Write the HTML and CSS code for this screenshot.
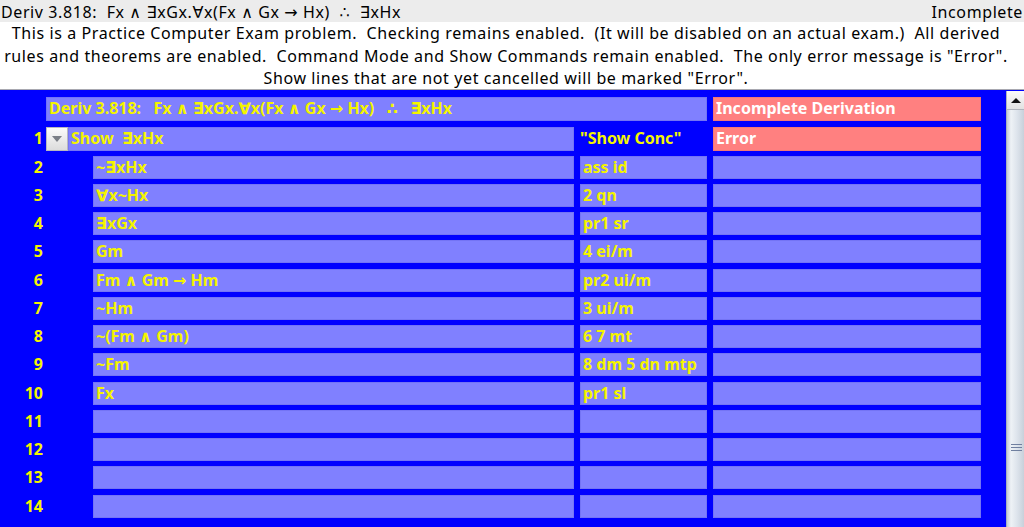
FILE: index.html
```html
<!DOCTYPE html>
<html>
<head>
<meta charset="utf-8">
<link rel="stylesheet" href="styles.css">
</head>
<body>
<div class="titlebar">
  <span>Deriv 3.818:&nbsp; Fx ∧ ∃xGx.∀x(Fx ∧ Gx → Hx)&nbsp; ∴&nbsp; ∃xHx</span>
  <span>Incomplete</span>
</div>
<div class="notice">
  This is a Practice Computer Exam problem.&nbsp; Checking remains enabled.&nbsp; (It will be disabled on an actual exam.)&nbsp; All derived<br>
  rules and theorems are enabled.&nbsp; Command Mode and Show Commands remain enabled.&nbsp; The only error message is "Error".<br>
  Show lines that are not yet cancelled will be marked "Error".
</div>
<div class="main">
  <div class="canvas">
    <div class="row header">
      <div class="num"></div>
      <div class="box headbox">Deriv 3.818:&nbsp;&nbsp; Fx ∧ ∃xGx.∀x(Fx ∧ Gx → Hx)&nbsp;&nbsp; ∴&nbsp;&nbsp; ∃xHx</div>
      <div class="box red status">Incomplete Derivation</div>
    </div>
    <div class="row first">
      <div class="num">1</div>
      <div class="drop"><svg width="12" height="8" viewBox="0 0 12 8"><path d="M1 1 L11 1 L6 7 Z" fill="#7a7e86"/></svg></div>
      <div class="box show">Show&nbsp; ∃xHx</div>
      <div class="just plain">"Show Conc"</div>
      <div class="box red status">Error</div>
    </div>
    <div class="row"><div class="num">2</div><div class="box f">~∃xHx</div><div class="box just">ass id</div><div class="box status"></div></div>
    <div class="row"><div class="num">3</div><div class="box f">∀x~Hx</div><div class="box just">2 qn</div><div class="box status"></div></div>
    <div class="row"><div class="num">4</div><div class="box f">∃xGx</div><div class="box just">pr1 sr</div><div class="box status"></div></div>
    <div class="row"><div class="num">5</div><div class="box f">Gm</div><div class="box just">4 ei/m</div><div class="box status"></div></div>
    <div class="row"><div class="num">6</div><div class="box f">Fm ∧ Gm → Hm</div><div class="box just">pr2 ui/m</div><div class="box status"></div></div>
    <div class="row"><div class="num">7</div><div class="box f">~Hm</div><div class="box just">3 ui/m</div><div class="box status"></div></div>
    <div class="row"><div class="num">8</div><div class="box f">~(Fm ∧ Gm)</div><div class="box just">6 7 mt</div><div class="box status"></div></div>
    <div class="row"><div class="num">9</div><div class="box f">~Fm</div><div class="box just">8 dm 5 dn mtp</div><div class="box status"></div></div>
    <div class="row"><div class="num">10</div><div class="box f">Fx</div><div class="box just">pr1 sl</div><div class="box status"></div></div>
    <div class="row"><div class="num">11</div><div class="box f"></div><div class="box just"></div><div class="box status"></div></div>
    <div class="row"><div class="num">12</div><div class="box f"></div><div class="box just"></div><div class="box status"></div></div>
    <div class="row"><div class="num">13</div><div class="box f"></div><div class="box just"></div><div class="box status"></div></div>
    <div class="row"><div class="num">14</div><div class="box f"></div><div class="box just"></div><div class="box status"></div></div>
  </div>
  <div class="scrollbar">
    <div class="up"><svg width="12" height="7" viewBox="0 0 12 7"><path d="M1 6 L11 6 L6 1 Z" fill="#111"/></svg></div>
    <div class="track"><div class="grip"></div></div>
  </div>
</div>
</body>
</html>
```
FILE: styles.css
```css
html, body {
  margin: 0;
  padding: 0;
  background: #0000ff;
  overflow: hidden;
}
body {
  font-family: "Noto Sans", "DejaVu Sans", sans-serif;
  width: 1024px;
  height: 527px;
}
.titlebar {
  height: 23px;
  background: #ececec;
  display: flex;
  justify-content: space-between;
  align-items: center;
  font-size: 16px;
  letter-spacing: 0.6px;
  color: #000;
  padding: 0 1px 0 1px;
  white-space: nowrap;
}
.notice {
  background: #fff;
  text-align: center;
  font-size: 16px;
  letter-spacing: 0.6px;
  line-height: 22.5px;
  height: 67px;
  margin-top: -1px;
  padding-right: 12px;
  color: #000;
  border-bottom: 1px solid #a8a8b0;
  white-space: nowrap;
  position: relative;
}
.main {
  display: flex;
  height: 436px;
  margin-top: 1px;
}
.canvas {
  flex: 1;
  background: #0000ff;
  padding-top: 6px;
  display: flex;
  flex-direction: column;
}
.row {
  display: flex;
  height: 23px;
  margin-top: 5.25px;
  font-size: 16px;
  font-weight: bold;
  color: #f4f400;
}
.row.header { margin-top: 0; height: 24px; }
.row.first { margin-top: 6px; height: 24px; margin-bottom: -0.75px; }
.num {
  width: 46px;
  flex: none;
  text-align: right;
  padding-right: 3px;
  box-sizing: border-box;
  line-height: 23px;
}
.box {
  background: #8080ff;
  box-sizing: border-box;
  border: 1px solid #7474f4;
  line-height: 21px;
  padding-left: 2px;
  white-space: nowrap;
  overflow: hidden;
}
.headbox {
  width: 661px;
  margin-right: 6px;
}
.red {
  background: #ff8080;
  border-color: #f07878;
  color: #fff;
}
.status { width: 268px; }
.drop {
  width: 22px;
  flex: none;
  box-sizing: border-box;
  border: 1px solid #b8b8c0;
  background: linear-gradient(#fbfbfb, #dcdcdc);
  display: flex;
  align-items: center;
  justify-content: center;
}
.show {
  width: 506px;
  margin-right: 6px;
}
.f {
  width: 481px;
  margin-left: 47px;
  margin-right: 6px;
}
.just {
  width: 127px;
  margin-right: 6px;
  flex: none;
}
.plain {
  line-height: 23px;
  padding-left: 0;
  white-space: nowrap;
}
.scrollbar {
  width: 18px;
  flex: none;
  display: flex;
  flex-direction: column;
  background: #e4e8ee;
}
.up {
  height: 18px;
  background: linear-gradient(#fafafa, #e2e2e2);
  border-left: 1px solid #b0b4bc;
  border-bottom: 1px solid #b0b4bc;
  display: flex;
  align-items: center;
  justify-content: center;
}
.track {
  flex: 1;
  background: linear-gradient(90deg, #c4ccd6 0px, #eef2f6 4px, #dde4ec 10px, #c8d0da 17px);
  border-left: 1px solid #a8b0bc;
  position: relative;
}
.grip {
  position: absolute;
  left: 4px;
  top: 334px;
  width: 11px;
  height: 5px;
  border-top: 1px solid #7080a0;
  border-bottom: 1px solid #7080a0;
  background: linear-gradient(transparent 2px, #7080a0 2px, #7080a0 3px, transparent 3px);
}
```
